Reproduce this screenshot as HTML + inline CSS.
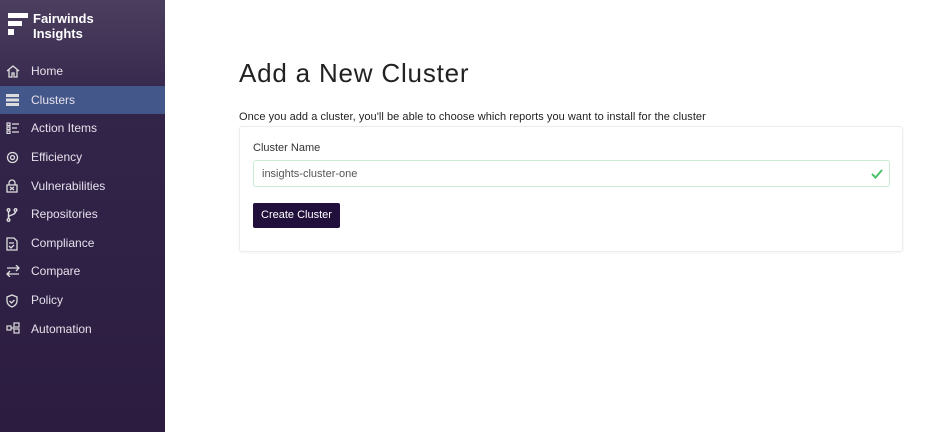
<!DOCTYPE html>
<html><head><style>
*{box-sizing:border-box;margin:0;padding:0}
body{width:936px;height:432px;overflow:hidden;background:#fff;font-family:"Liberation Sans",sans-serif;position:relative}
.sb{position:absolute;left:0;top:0;width:165px;height:432px;background:linear-gradient(#4b3e5e 0%,#33254a 25%,#2b1c40 100%)}
.logo{position:absolute;left:8px;top:11px;color:#fff;font-weight:bold;font-size:13px;line-height:15px}
.logo .t{position:absolute;left:25px;top:0;white-space:nowrap}
.nav{position:absolute;top:57px;left:0;width:165px}
.it{height:28.6px;display:flex;align-items:center;color:#e6e1ec;font-size:12px;padding-left:31px;position:relative}
.it.a{background:#44578a}
.it svg{position:absolute;left:6px;top:8px}
h1{position:absolute;left:239px;top:58px;font-weight:normal;font-size:26px;color:#222;letter-spacing:.8px}
.sub{position:absolute;left:239px;top:111px;font-size:11px;color:#222;letter-spacing:.05px}
.card{position:absolute;left:239px;top:126px;width:664px;height:126px;border:1px solid #ececec;border-radius:3px;box-shadow:0 1px 2px rgba(0,0,0,.05)}
.lab{position:absolute;left:13px;top:15px;font-size:11px;color:#333}
.inp{position:absolute;left:13px;top:33px;width:637px;height:27px;border:1px solid #c9ecd2;border-radius:3px;font-size:11px;color:#555;padding:7px 8px}
.btn{position:absolute;left:13px;top:76px;width:87px;height:25px;background:#22103c;color:#fff;border-radius:2px;font-size:11px;text-align:center;line-height:25px}
</style></head><body>
<div class="sb">
<div class="logo">
<svg width="20" height="26" viewBox="0 0 20 26" style="position:absolute;left:0;top:2px"><rect x="0" y="0" width="20" height="5" fill="#fff"/><rect x="0" y="8" width="14" height="5" fill="#fff"/><rect x="0" y="16" width="6" height="6" fill="#fff"/></svg>
<div class="t">Fairwinds<br>Insights</div></div>
<div class="nav">
<div class="it"><svg width="14" height="13" viewBox="0 0 14 13" fill="none" stroke="#ddd" stroke-width="1.3"><path d="M1 6L7 1l6 5M3 5v7h3V8h2v4h3V5"/></svg>Home</div>
<div class="it a"><svg width="13" height="12" viewBox="0 0 13 12" fill="#ddd"><rect x="0" y="0" width="13" height="3"/><rect x="0" y="4.5" width="13" height="3"/><rect x="0" y="9" width="13" height="3"/></svg>Clusters</div>
<div class="it"><svg width="13" height="12" viewBox="0 0 13 12" fill="none" stroke="#ddd" stroke-width="1.2"><rect x="1" y="1" width="3" height="2.5"/><rect x="1" y="5" width="3" height="2.5"/><rect x="1" y="9" width="3" height="2.5"/><path d="M6 2h7M6 6h5M6 10h7"/></svg>Action Items</div>
<div class="it"><svg width="13" height="13" viewBox="0 0 13 13" fill="none" stroke="#ddd" stroke-width="1.3"><circle cx="6.5" cy="6.5" r="5"/><circle cx="6.5" cy="6.5" r="2"/></svg>Efficiency</div>
<div class="it"><svg width="12" height="14" viewBox="0 0 12 14" fill="none" stroke="#ddd" stroke-width="1.3"><path d="M3 6V4a3 3 0 016 0v2"/><rect x="1" y="6" width="10" height="7"/><path d="M4 8l4 3M8 8l-4 3"/></svg>Vulnerabilities</div>
<div class="it"><svg width="12" height="14" viewBox="0 0 12 14" fill="none" stroke="#ddd" stroke-width="1.4"><circle cx="2.5" cy="2" r="1.3"/><circle cx="9.5" cy="2" r="1.3"/><circle cx="2.5" cy="12" r="1.3"/><path d="M2.5 3.5v7M9.5 3.5c0 4-7 3-7 6"/></svg>Repositories</div>
<div class="it"><svg width="12" height="14" viewBox="0 0 12 14" fill="none" stroke="#ddd" stroke-width="1.3"><path d="M1 1h7l3 3v9H1z"/><path d="M3 6h5M3 9l2 2 3-3"/></svg>Compliance</div>
<div class="it"><svg width="14" height="12" viewBox="0 0 14 12" fill="none" stroke="#ddd" stroke-width="1.3"><path d="M1 3h12M10 0l3 3-3 3M13 9H1M4 6L1 9l3 3"/></svg>Compare</div>
<div class="it"><svg width="12" height="14" viewBox="0 0 12 14" fill="none" stroke="#ddd" stroke-width="1.3"><path d="M6 1l5 2v4c0 3-2.5 5-5 6-2.5-1-5-3-5-6V3z"/><path d="M3.5 7l2 2 3-3"/></svg>Policy</div>
<div class="it"><svg width="15" height="12" viewBox="0 0 15 12" fill="none" stroke="#ddd" stroke-width="1.2"><rect x="1" y="4" width="4" height="4"/><rect x="8" y="1" width="5" height="4"/><rect x="8" y="7" width="5" height="4"/><path d="M5 6h3"/></svg>Automation</div>
</div></div>
<h1>Add a New Cluster</h1>
<div class="sub">Once you add a cluster, you'll be able to choose which reports you want to install for the cluster</div>
<div class="card">
<div class="lab">Cluster Name</div>
<div class="inp">insights-cluster-one
<svg width="12" height="10" viewBox="0 0 12 10" style="position:absolute;right:6px;top:8px" fill="none" stroke="#4cc26a" stroke-width="2"><path d="M1 5l3.5 3.5L11 1"/></svg></div>
<div class="btn">Create Cluster</div>
</div>
</body></html>
